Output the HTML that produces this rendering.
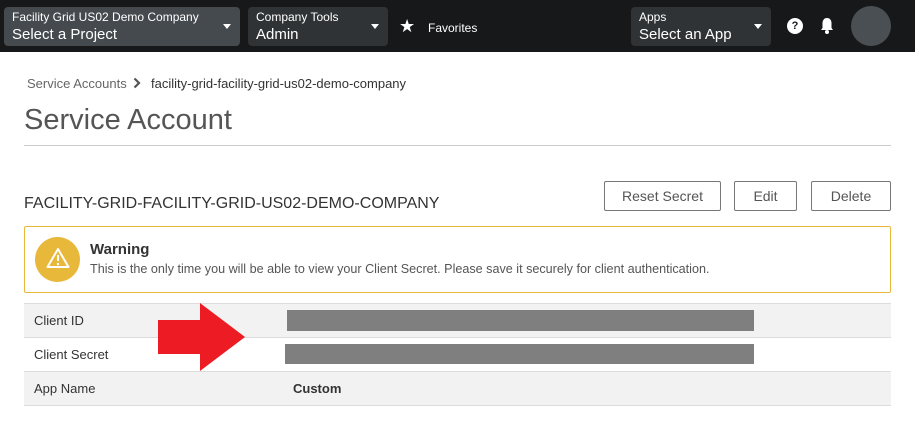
<!DOCTYPE html>
<html><head><meta charset="utf-8"><style>
*{box-sizing:border-box;margin:0;padding:0}
body{width:915px;height:429px;background:#fff;font-family:"Liberation Sans",sans-serif;position:relative;overflow:hidden;color:#333}
.top{position:absolute;left:0;top:0;width:915px;height:52px;background:#17181a}
.dd{position:absolute;top:7px;height:39px;background:#44494d;border-radius:4px;color:#fff}
.dd .s{position:absolute;left:8px;top:3px;font-size:12px}
.dd .b{position:absolute;left:8px;top:19px;font-size:15px}
.dd .c{position:absolute;right:9px;top:17px;width:0;height:0;border-left:4px solid transparent;border-right:4px solid transparent;border-top:5px solid #fff}
.abs{position:absolute}
.btn{position:absolute;top:181px;height:30px;border:1px solid #777;border-radius:2px;font-size:14px;color:#555;text-align:center;line-height:28px}
.row{position:absolute;left:24px;width:867px;height:34px;border-top:1px solid #dcdcdc;font-size:13px;color:#333;line-height:33px}
.row span{position:absolute;left:10px}
</style></head><body>
<div class="top">
 <div class="dd" style="left:4px;width:236px;background:#454a4e"><div class="s">Facility Grid US02 Demo Company</div><div class="b">Select a Project</div><div class="c"></div></div>
 <div class="dd" style="left:248px;width:140px;background:#303335"><div class="s">Company Tools</div><div class="b">Admin</div><div class="c"></div></div>
 <div class="abs" style="left:399px;top:16px;color:#fff;font-size:18px">★</div>
 <div class="abs" style="left:428px;top:21px;color:#fff;font-size:12px">Favorites</div>
 <div class="dd" style="left:631px;width:140px;background:#303335"><div class="s">Apps</div><div class="b">Select an App</div><div class="c"></div></div>
 <div class="abs" style="left:787px;top:18px;width:16px;height:16px;border-radius:50%;background:#fff;color:#17181a;font-size:11px;font-weight:bold;text-align:center;line-height:16px">?</div>
 <svg class="abs" style="left:819px;top:17px" width="16" height="18" viewBox="0 0 16 18"><path d="M8 1C5 1 3.5 3.5 3.5 6v5L2 13h12l-1.5-2V6C12.5 3.5 11 1 8 1z" fill="#fff"/><circle cx="8" cy="15" r="2" fill="#fff"/></svg>
 <div class="abs" style="left:851px;top:6px;width:40px;height:40px;border-radius:50%;background:#4a4f53"></div>
</div>
<div class="abs" style="left:27px;top:76px;font-size:13px;color:#666">Service Accounts</div>
<svg class="abs" style="left:132px;top:77px" width="10" height="12" viewBox="0 0 10 12"><path d="M2.5 1.5L7 6L2.5 10.5" fill="none" stroke="#555" stroke-width="2.2"/></svg>
<div class="abs" style="left:151px;top:76px;font-size:13px;color:#333">facility-grid-facility-grid-us02-demo-company</div>
<div class="abs" style="left:24px;top:104px;font-size:29px;color:#555;font-weight:300">Service Account</div>
<div class="abs" style="left:24px;top:145px;width:867px;height:1px;background:#ccc"></div>
<div class="abs" style="left:24px;top:195px;font-size:16px;color:#333">FACILITY-GRID-FACILITY-GRID-US02-DEMO-COMPANY</div>
<div class="btn" style="left:604px;width:117px">Reset Secret</div>
<div class="btn" style="left:734px;width:63px">Edit</div>
<div class="btn" style="left:811px;width:80px">Delete</div>
<div class="abs" style="left:24px;top:226px;width:867px;height:67px;border:1px solid #e8b83a;border-radius:2px"></div>
<div class="abs" style="left:35px;top:237px;width:45px;height:45px;border-radius:50%;background:#e8b83a"></div>
<svg class="abs" style="left:45px;top:246px" width="26" height="24" viewBox="0 0 26 24"><path d="M13 3L2.5 21h21z" fill="none" stroke="#fff" stroke-width="2" stroke-linejoin="round"/><path d="M13 9v6" stroke="#fff" stroke-width="2"/><circle cx="13" cy="18" r="1.2" fill="#fff"/></svg>
<div class="abs" style="left:90px;top:241px;font-size:15px;font-weight:bold;color:#333">Warning</div>
<div class="abs" style="left:90px;top:262px;font-size:12.6px;color:#555">This is the only time you will be able to view your Client Secret. Please save it securely for client authentication.</div>
<div class="row" style="top:303px;background:#f2f2f2"><span>Client ID</span></div>
<div class="row" style="top:337px;background:#fff"><span>Client Secret</span></div>
<div class="row" style="top:371px;background:#f2f2f2;border-bottom:1px solid #dcdcdc;height:35px"><span>App Name</span><span style="left:269px;font-weight:bold">Custom</span></div>
<div class="abs" style="left:287px;top:310px;width:467px;height:21px;background:#7f7f7f"></div>
<div class="abs" style="left:285px;top:344px;width:469px;height:20px;background:#7f7f7f"></div>
<svg class="abs" style="left:0;top:0" width="915" height="429"><path d="M158 320H200V303L245 337L200 371V354H158Z" fill="#ed1c24"/></svg>
</body></html>
